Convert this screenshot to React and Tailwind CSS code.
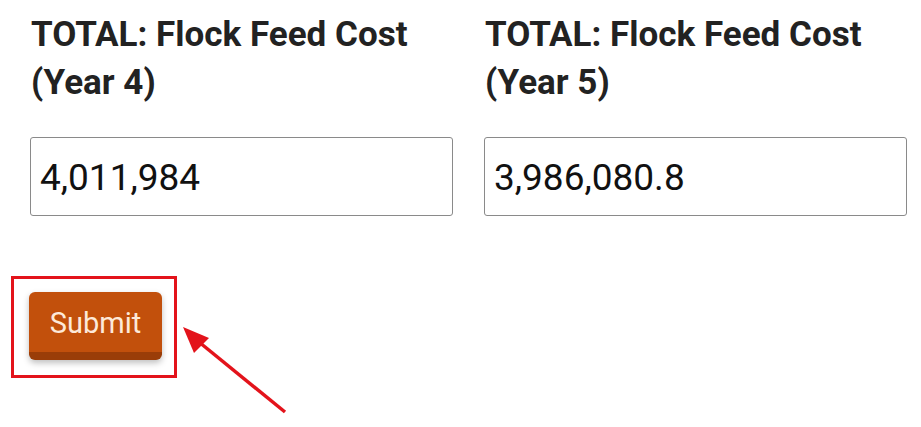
export default function App() {
  const fields = [
    { label: 'TOTAL: Flock Feed Cost', year: '(Year 4)', value: '4,011,984' },
    { label: 'TOTAL: Flock Feed Cost', year: '(Year 5)', value: '3,986,080.8' },
  ]

  return (
    <div className="w-[921px] h-[427px] bg-white overflow-hidden font-['Roboto',sans-serif]">
      <div className="pl-[30px] pr-[14px] pt-[11px]">
        {/* Fields */}
        <div className="grid grid-cols-2 gap-[31px]">
          {fields.map(f => (
            <div key={f.year}>
              <p className="text-[35px] leading-[48px] font-bold text-[#222] pl-px">
                {f.label}
                <br />
                {f.year}
              </p>
              <div className="mt-[30px] h-[79px] border border-[#8a8a8a] rounded-[3px] flex items-center px-[9px]">
                <span className="text-[37px] text-[#111] pt-[2px]">{f.value}</span>
              </div>
            </div>
          ))}
        </div>

        {/* Submit highlighted */}
        <div className="relative mt-[60px] -ml-[19px] w-[166px]">
          <div className="border-[3px] border-[#e3131b] pt-[13px] pb-[15px] pl-[15px]">
            <button className="w-[133px] h-[68px] rounded-md bg-[#c2500c] border-b-[8px] border-[#9a3d08] shadow-[0_3px_6px_rgba(0,0,0,0.25)] text-[29px] text-[#fde9d9] pt-[3px]">
              Submit
            </button>
          </div>
          <svg
            className="absolute left-[143px] top-[44px]"
            width="140"
            height="100"
            viewBox="0 0 140 100"
          >
            <line x1="45" y1="22" x2="131" y2="92" stroke="#e3131b" strokeWidth="3.5" />
            <polygon points="29,7 40,33 55,18" fill="#e3131b" />
          </svg>
        </div>
      </div>
    </div>
  )
}
